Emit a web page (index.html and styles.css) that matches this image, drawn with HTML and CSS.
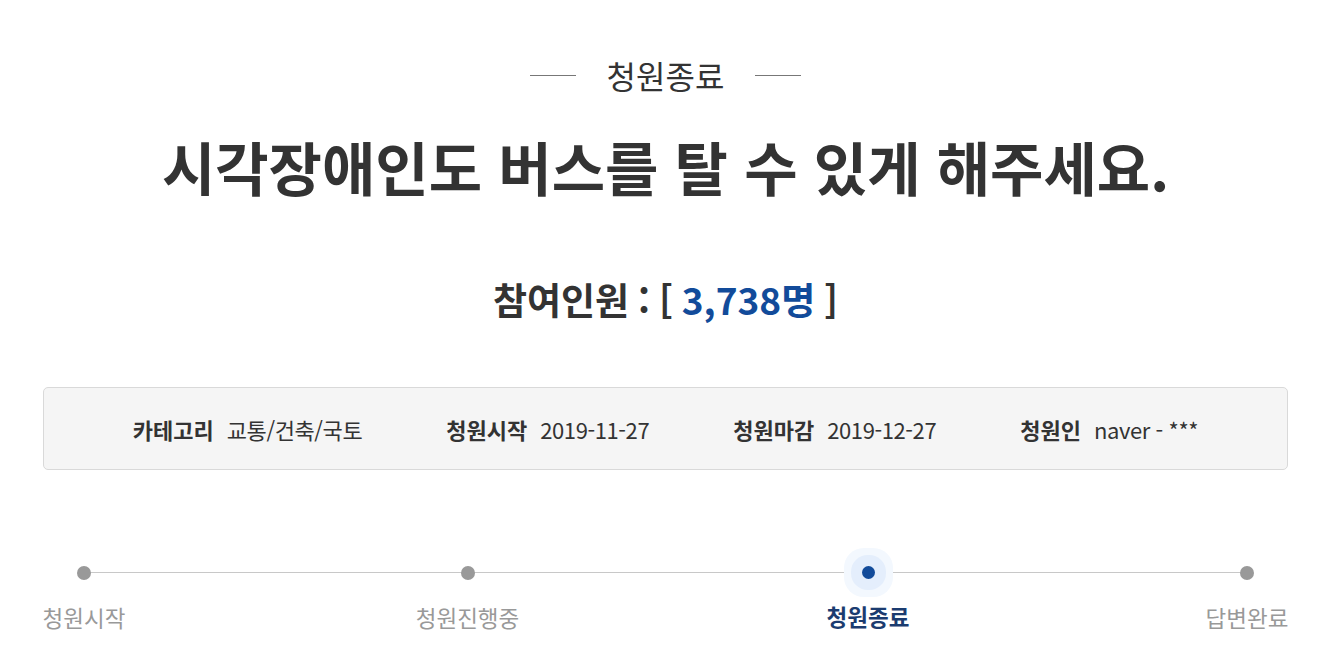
FILE: index.html
```html
<!DOCTYPE html>
<html lang="ko">
<head>
<meta charset="utf-8">
<title>청원종료</title>
<link rel="stylesheet" href="styles.css">
</head>
<body>
<div class="wrap">
  <div class="status"><span class="status-line"></span><span class="status-text">청원종료</span><span class="status-line"></span></div>
  <h1 class="title">시각장애인도 버스를 탈 수 있게 해주세요.</h1>
  <h2 class="count">참여인원 : [ <span class="num">3,738명</span> ]</h2>
  <ul class="info">
    <li><strong>카테고리</strong><span>교통/건축/국토</span></li>
    <li><strong>청원시작</strong><span>2019-11-27</span></li>
    <li><strong>청원마감</strong><span>2019-12-27</span></li>
    <li><strong>청원인</strong><span>naver - ***</span></li>
  </ul>
  <ol class="steps">
    <li class="step s1"><i class="dot"></i><span>청원시작</span></li>
    <li class="step s2"><i class="dot"></i><span>청원진행중</span></li>
    <li class="step s3 on"><i class="dot"></i><span>청원종료</span></li>
    <li class="step s4"><i class="dot"></i><span>답변완료</span></li>
  </ol>
</div>
</body>
</html>
```

FILE: styles.css
```css
* { box-sizing: border-box; }
html, body { margin: 0; padding: 0; background: #fff; }
body {
  font-family: "Noto Sans CJK KR", "Noto Sans", sans-serif;
  color: #333;
}
.wrap {
  width: 1245px;
  margin-left: 43px;
  padding-top: 54px;
}
.status {
  display: flex;
  align-items: center;
  justify-content: center;
  gap: 31px;
  height: 42px;
}
.status-line {
  width: 46px;
  height: 1px;
  background: #777;
}
.status-text {
  font-size: 32px;
  font-weight: 400;
  line-height: 42px;
  color: #333;
}
.title {
  margin: 32px 0 0;
  text-align: center;
  font-size: 58px;
  font-weight: 700;
  line-height: 76px;
  color: #333;
}
.count {
  margin: 71px 0 0;
  text-align: center;
  font-size: 37px;
  font-weight: 700;
  line-height: 48px;
  color: #333;
  word-spacing: -1.5px;
}
.count .num { color: #124b9a; }
.info {
  list-style: none;
  margin: 64px 0 0;
  padding: 0;
  height: 83px;
  background: #f5f5f5;
  border: 1px solid #d9d9d9;
  border-radius: 5px;
  display: flex;
  align-items: center;
  justify-content: center;
  gap: 84px;
  font-size: 22px;
}
.info li { display: flex; align-items: center; gap: 13px; white-space: nowrap; }
.info strong { font-weight: 700; color: #333; }
.info span { font-weight: 400; color: #333; letter-spacing: -0.4px; }
.steps {
  list-style: none;
  margin: 94px 0 0;
  padding: 0;
  position: relative;
  display: grid;
  grid-template-columns: 82px 291px 103px 308px 82px 297px 82px;
}
.steps::before {
  content: "";
  position: absolute;
  top: 8px;
  left: 41px;
  right: 41px;
  height: 1px;
  background: #c8c8c8;
}
.step {
  display: flex;
  flex-direction: column;
  align-items: center;
  position: relative;
}
.s1 { grid-column: 1; }
.s2 { grid-column: 3; }
.s3 { grid-column: 5; }
.s4 { grid-column: 7; }
.dot {
  display: block;
  width: 14px;
  height: 14px;
  border-radius: 50%;
  background: #999;
  margin-top: 2px;
}
.step.on .dot {
  width: 13px;
  height: 13px;
  background: #124b9a;
  box-shadow: 0 0 0 11px #e4eefc, 0 0 0 18px #f3f8fe;
}
.step span {
  margin-top: 22px;
  font-size: 22.5px;
  line-height: 30px;
  color: #999;
  white-space: nowrap;
}
.step.on span { color: #1b3c70; font-weight: 700; }
```
